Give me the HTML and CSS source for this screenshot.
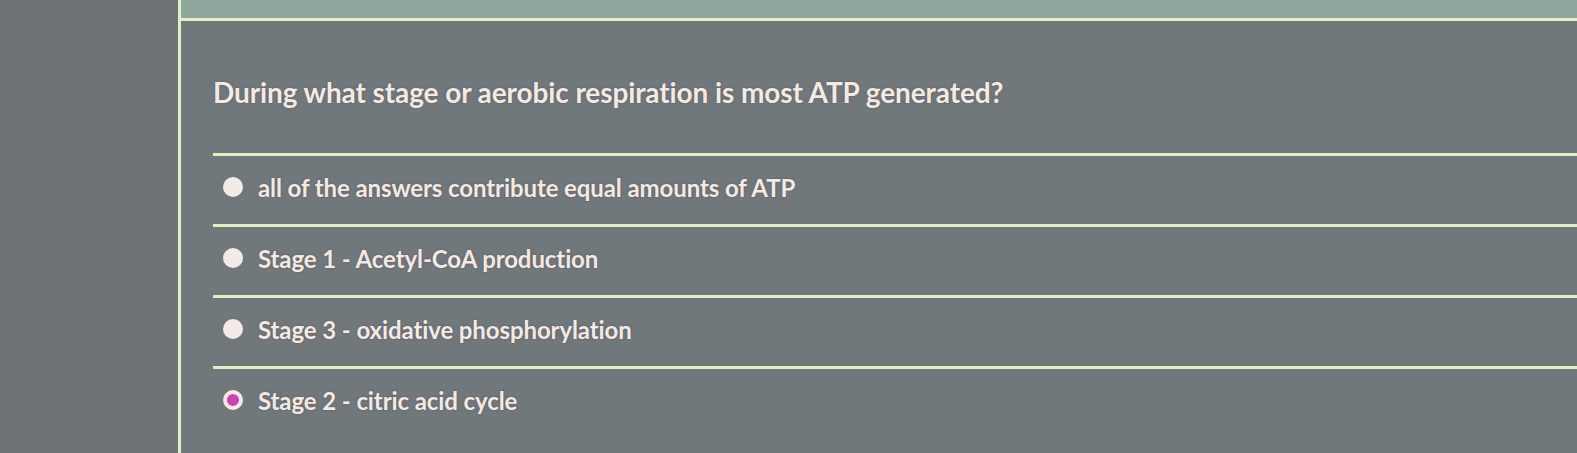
FILE: index.html
```html
<!DOCTYPE html>
<html lang="en">
<head>
    <meta charset="UTF-8">
    <meta name="viewport" content="width=device-width, initial-scale=1.0">
    <title>Quiz - Aerobic Respiration</title>
    <link rel="stylesheet" href="styles.css">
</head>
<body>
    <div class="page">
        <div class="sidebar"></div>
        <div class="main">
            <div class="topbar"></div>
            <div class="question">
                <h2>During what stage or aerobic respiration is most ATP generated?</h2>
                <ul class="answers">
                    <li><span class="radio"></span>all of the answers contribute equal amounts of ATP</li>
                    <li><span class="radio"></span>Stage 1 - Acetyl-CoA production</li>
                    <li><span class="radio"></span>Stage 3 - oxidative phosphorylation</li>
                    <li class="checked"><span class="radio"></span>Stage 2 - citric acid cycle</li>
                </ul>
            </div>
        </div>
    </div>
</body>
</html>
```

FILE: styles.css
```css
body {
    margin: 0;
    background-color: #6e7478;
    font-family: Lato, "Open Sans", sans-serif;
    color: #f3ebe2;
}
.page {
    display: flex;
    height: 453px;
    overflow: hidden;
}
.sidebar {
    width: 178px;
    background-color: #6d7377;
}
.main {
    flex: 1;
    background-color: #71787c;
    border-left: 3px solid #e4eec6;
}
.topbar {
    height: 18px;
    background-color: #8fa69c;
    border-bottom: 3px solid #e4eec6;
}
.question {
    padding-left: 32px;
}
.question h2 {
    margin: 0;
    padding-top: 54px;
    height: 78px;
    font-size: 28px;
    font-weight: 700;
    letter-spacing: -0.1px;
    text-shadow: 0 0 2px rgba(70, 40, 70, 0.5);
}
.answers {
    list-style: none;
    margin: 0;
    padding: 0;
}
.answers li {
    display: flex;
    align-items: center;
    gap: 15px;
    height: 62px;
    padding-bottom: 6px;
    border-top: 3px solid #e4eec6;
    padding-left: 10px;
    font-size: 24px;
    font-weight: 700;
    letter-spacing: -0.1px;
    text-shadow: 0 0 2px rgba(70, 40, 70, 0.5);
}
.radio {
    width: 20px;
    height: 20px;
    border-radius: 50%;
    background-color: #f2ebe8;
    box-sizing: border-box;
    flex-shrink: 0;
}
.checked .radio {
    border: 4px solid #f2ebe8;
    background-color: #d23fb0;
}
```
